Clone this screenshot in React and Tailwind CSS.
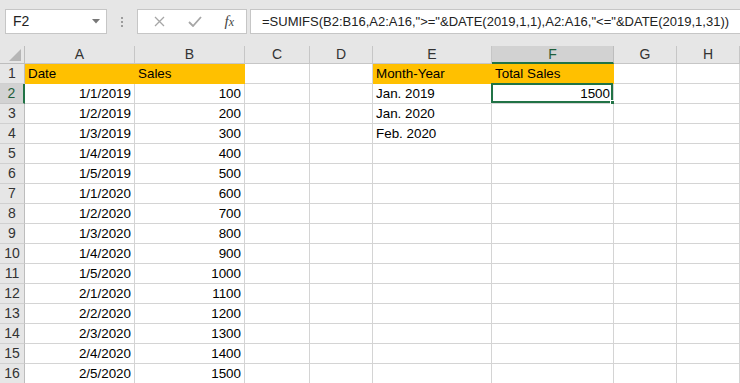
import React from "react";

const COLS = ["A", "B", "C", "D", "E", "F", "G", "H"];

const dates = [
  "1/1/2019", "1/2/2019", "1/3/2019", "1/4/2019", "1/5/2019",
  "1/1/2020", "1/2/2020", "1/3/2020", "1/4/2020", "1/5/2020",
  "2/1/2020", "2/2/2020", "2/3/2020", "2/4/2020", "2/5/2020",
];

// cell content by row
function rowData(r) {
  if (r === 1) return { A: "Date", B: "Sales", E: "Month-Year", F: "Total Sales" };
  const d = { A: dates[r - 2], B: String((r - 1) * 100) };
  if (r === 2) { d.E = "Jan. 2019"; d.F = "1500"; }
  if (r === 3) d.E = "Jan. 2020";
  if (r === 4) d.E = "Feb. 2020";
  return d;
}

const rightAligned = (r, col) => r > 1 && (col === "A" || col === "B" || col === "F");

export default function App() {
  const rows = Array.from({ length: 16 }, (_, i) => i + 1);

  return (
    <div
      className="w-[740px] h-[383px] overflow-hidden bg-white text-black"
      style={{ fontFamily: '"Liberation Sans", Arial, sans-serif' }}
    >
      {/* Formula bar */}
      <div className="h-[46px] bg-[#e6e6e6] flex items-start pt-[9px] pl-[5px]">
        <div className="w-[102px] h-[25px] bg-white border border-[#c6c6c6] flex items-center justify-between pl-[7px] pr-[6px] text-[14px] text-[#222]">
          <span>F2</span>
          <svg width="8" height="5" viewBox="0 0 8 5">
            <path d="M0 0 L8 0 L4 4.5 Z" fill="#777" />
          </svg>
        </div>
        <div className="w-[30px] h-[25px] flex flex-col items-center justify-center gap-[2px]">
          <span className="w-[2px] h-[2px] bg-[#9c9c9c]" />
          <span className="w-[2px] h-[2px] bg-[#9c9c9c]" />
          <span className="w-[2px] h-[2px] bg-[#9c9c9c]" />
        </div>
        <div className="w-[110px] h-[25px] bg-white border border-[#c6c6c6] flex items-center justify-between pl-[16px] pr-[12px]">
          <svg width="11" height="11" viewBox="0 0 11 11">
            <path d="M1 1 L10 10 M10 1 L1 10" stroke="#a6a6a6" strokeWidth="1.3" />
          </svg>
          <svg width="14" height="11" viewBox="0 0 14 11">
            <path d="M1 6 L5 10 L13 1" stroke="#a6a6a6" strokeWidth="1.8" fill="none" />
          </svg>
          <span
            className="text-[15px] italic text-[#444] leading-none"
            style={{ fontFamily: '"Liberation Serif", "Times New Roman", serif' }}
          >
            f<span className="text-[12px]">x</span>
          </span>
        </div>
        <div className="ml-[3px] flex-1 h-[25px] bg-white border-y border-l border-[#c6c6c6] flex items-center pl-[11px] text-[13px] text-[#222] whitespace-nowrap overflow-hidden">
          =SUMIFS(B2:B16,A2:A16,"&gt;="&amp;DATE(2019,1,1),A2:A16,"&lt;="&amp;DATE(2019,1,31))
        </div>
      </div>

      {/* Grid */}
      <div className="grid grid-cols-[25px_110px_110px_65px_63px_119px_122px_63px_63px] grid-rows-[18px] auto-rows-[20px]">
        {/* Header row */}
        <div className="bg-[#e6e6e6] border-r border-b border-[#bdbdbd] flex items-end justify-end pr-[3px] pb-[2px]">
          <svg width="12" height="12" viewBox="0 0 12 12">
            <path d="M12 0 L12 12 L0 12 Z" fill="#b6b6b6" />
          </svg>
        </div>
        {COLS.map((c) => (
          <div
            key={c}
            className={
              c === "F"
                ? "bg-[#d2d2d2] border-r border-[#bdbdbd] border-b-2 border-b-[#217346] flex items-center justify-center text-[14px] text-[#1e5e3a]"
                : "bg-[#e6e6e6] border-r border-b border-[#c6c6c6] flex items-center justify-center text-[14px] text-[#333]"
            }
          >
            {c}
          </div>
        ))}

        {rows.map((r) => {
          const d = rowData(r);
          return (
            <React.Fragment key={r}>
              <div
                className={
                  r === 2
                    ? "bg-[#d2d2d2] border-b border-[#c6c6c6] border-r-2 border-r-[#217346] flex items-center justify-center text-[14px] text-[#1e5e3a]"
                    : "bg-[#e6e6e6] border-b border-[#d0d0d0] border-r border-r-[#bdbdbd] flex items-center justify-center text-[14px] text-[#333]"
                }
              >
                {r}
              </div>
              {COLS.map((c) => {
                const filled = r === 1 && (c === "A" || c === "B" || c === "E" || c === "F");
                const selected = r === 2 && c === "F";
                return (
                  <div
                    key={c}
                    className={
                      (filled
                        ? "bg-[#ffc000] border-b border-r border-[#ffc000] "
                        : "bg-white border-b border-r border-[#d4d4d4] ") +
                      (rightAligned(r, c) ? "justify-end " : "justify-start ") +
                      "relative flex items-end px-[3px] pb-[1px] text-[13.4px] leading-[17px] whitespace-nowrap"
                    }
                  >
                    {d[c] || ""}
                    {selected && (
                      <>
                        <div className="absolute -left-[1px] -top-[1px] right-0 bottom-0 border-2 border-[#217346]" />
                        <div className="absolute -right-[3px] -bottom-[3px] w-[6px] h-[6px] bg-[#217346] border border-white" />
                      </>
                    )}
                  </div>
                );
              })}
            </React.Fragment>
          );
        })}
      </div>
    </div>
  );
}
